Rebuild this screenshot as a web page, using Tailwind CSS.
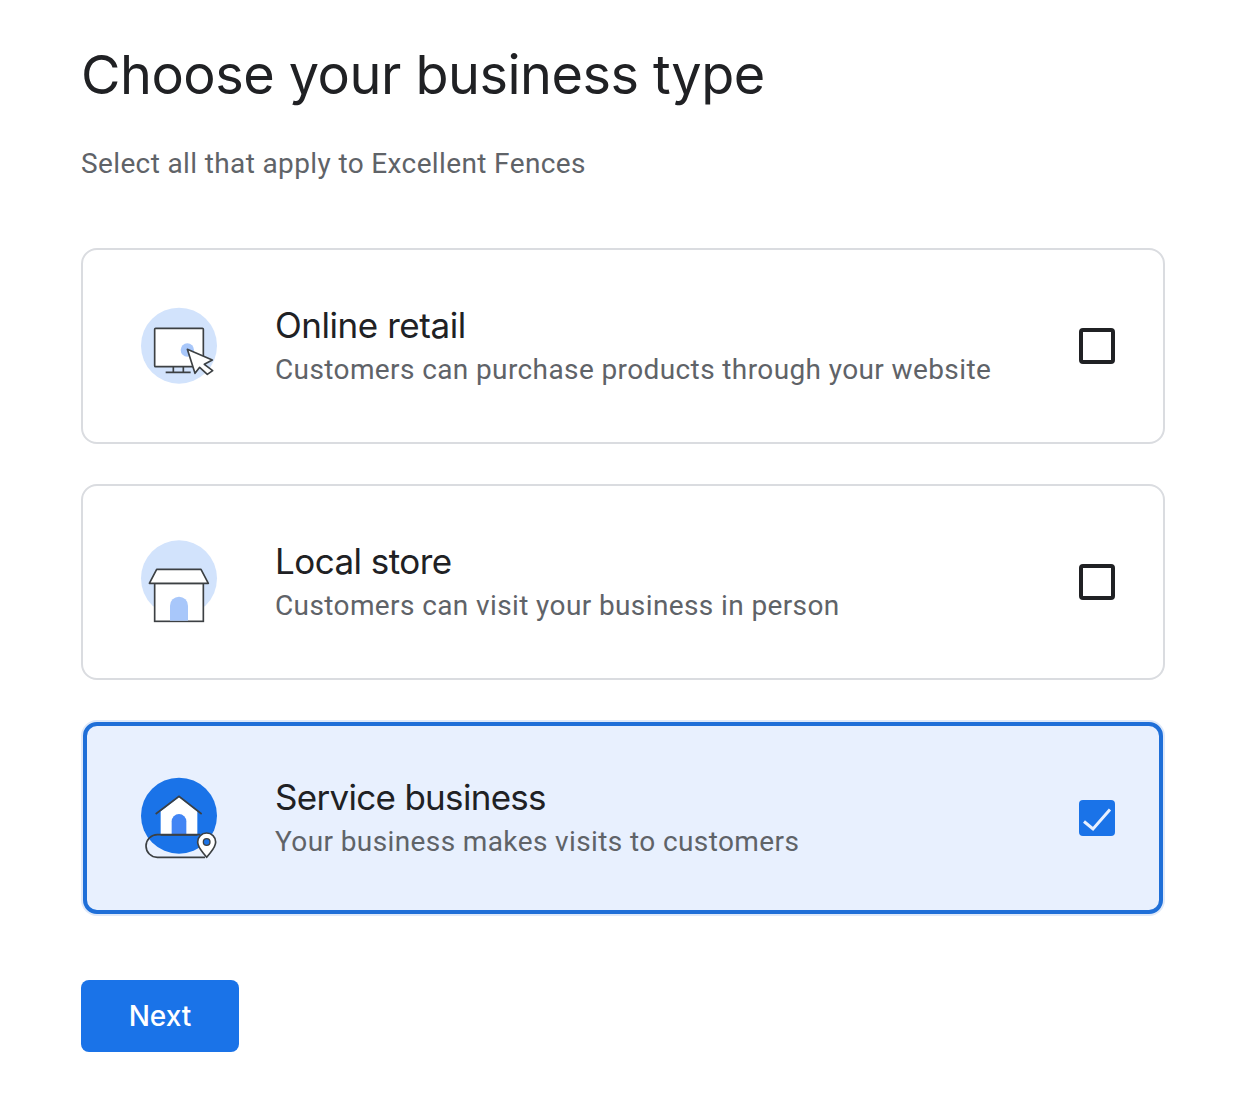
<!DOCTYPE html>
<html><head><meta charset="utf-8"><script src="https://cdn.jsdelivr.net/npm/@tailwindcss/browser@4"></script></head>
<body class="bg-white">
<div class="w-[1250px] h-[1096px] px-[81px] pt-[39px] font-['Roboto',sans-serif] overflow-hidden">
<h1 class="font-['Inter',sans-serif] text-[54px] leading-[72px] font-normal text-[#202124] tracking-[-0.5px]">Choose your business type</h1>
<p class="mt-[33px] text-[28px] leading-[40px] text-[#5f6368] tracking-[0.37px]">Select all that apply to Excellent Fences</p>
<div class="mt-[64px] w-[1084px] flex flex-col gap-[40px]">

<div class="h-[196px] border-2 border-[#dadce0] rounded-2xl flex items-center pl-[42px] pr-[48px] bg-white">
<svg class="w-[110px] h-[100px] shrink-0" viewBox="0 3 330 300" fill="none"><circle cx="162" cy="152" r="114" fill="#d2e3fc"/><rect x="89" y="100" width="146" height="115" rx="3" fill="#fff" stroke="#3c4043" stroke-width="5"/><path d="M145 215V232M175 215V232M122 232H197" stroke="#3c4043" stroke-width="5"/><circle cx="187" cy="165" r="20" fill="#a8c7fa"/><path d="M187 163L262 195L238 208L263 227L247 238L224 217L210 235Z" fill="#fff" stroke="#3c4043" stroke-width="5" stroke-linejoin="round"/></svg>
<div class="ml-[40px] flex-1"><div class="font-['Inter',sans-serif] text-[35px] leading-[44px] text-[#202124] tracking-[-0.45px]">Online retail</div><div class="mt-[3px] text-[28px] leading-[40px] text-[#5f6368] tracking-[0.39px]">Customers can purchase products through your website</div></div>
<div class="w-[36px] h-[36px] border-4 border-[#202124] rounded-[4px] shrink-0"></div>
</div>

<div class="h-[196px] border-2 border-[#dadce0] rounded-2xl flex items-center pl-[42px] pr-[48px] bg-white">
<svg class="w-[110px] h-[100px] shrink-0" viewBox="0 6 330 300" fill="none"><circle cx="162" cy="145" r="114" fill="#d2e3fc"/><rect x="89" y="160" width="146" height="114" fill="#fff" stroke="#3c4043" stroke-width="5"/><path d="M95 118H228L250 160H73Z" fill="#fff" stroke="#3c4043" stroke-width="5" stroke-linejoin="round"/><path d="M135 272V227a27 27 0 0 1 54 0V272Z" fill="#a8c7fa"/></svg>
<div class="ml-[40px] flex-1"><div class="font-['Inter',sans-serif] text-[35px] leading-[44px] text-[#202124] tracking-[-0.55px]">Local store</div><div class="mt-[3px] text-[28px] leading-[40px] text-[#5f6368] tracking-[0.39px]">Customers can visit your business in person</div></div>
<div class="w-[36px] h-[36px] border-4 border-[#202124] rounded-[4px] shrink-0"></div>
</div>

<div class="h-[192px] m-[2px] border-[4px] border-[#1f6fd8] ring-2 ring-[#dfe9f9] rounded-[14px] flex items-center pl-[38px] pr-[44px] bg-[#e8f0fe]">
<svg class="w-[110px] h-[100px] shrink-0" viewBox="0 0 330 300" fill="none"><circle cx="162" cy="143" r="114" fill="#1a73e8"/><path d="M107 200V130L162 88L217 130V200Z" fill="#fff"/><path d="M92 138L162 85L230 138" stroke="#3c4043" stroke-width="5"/><path d="M107 201H217" stroke="#3c4043" stroke-width="5"/><path d="M140 200V160a22 22 0 0 1 44 0V200Z" fill="#4285f4"/><path d="M240 268H97a34 34 0 0 1 0-68H225" stroke="#3c4043" stroke-width="5"/><path d="M245 268C232 250 218 240 218 222a27 27 0 0 1 54 0C272 240 258 250 245 268Z" fill="#fff" stroke="#3c4043" stroke-width="5" stroke-linejoin="round"/><circle cx="245" cy="222" r="10" fill="#1a73e8" stroke="#3c4043" stroke-width="4"/></svg>
<div class="ml-[40px] flex-1"><div class="font-['Inter',sans-serif] text-[35px] leading-[44px] text-[#202124] tracking-[-0.7px]">Service business</div><div class="mt-[3px] text-[28px] leading-[40px] text-[#5f6368] tracking-[0.39px]">Your business makes visits to customers</div></div>
<div class="w-[36px] h-[36px] bg-[#1a73e8] rounded-[4px] shrink-0"><svg class="w-[36px] h-[36px]" viewBox="0 0 36 36" fill="none"><path d="M5 21.5L14 29L31 9.5" stroke="#e8f0fe" stroke-width="3"/></svg></div>
</div>
</div>
<button class="mt-[64px] w-[158px] h-[72px] rounded-lg bg-[#1a73e8] text-white font-['Inter',sans-serif] text-[28px] font-medium">Next</button>
</div>
</body></html>
